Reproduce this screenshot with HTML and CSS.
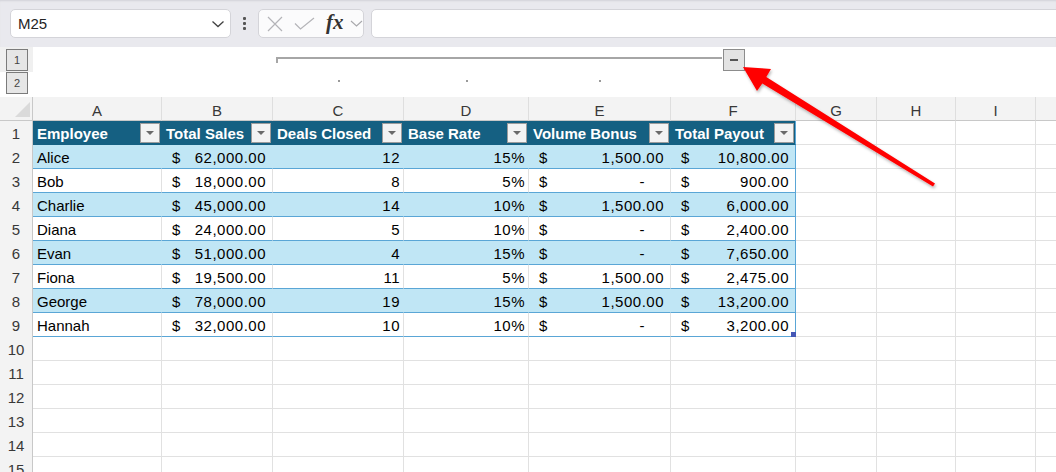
FILE: index.html
```html
<!DOCTYPE html>
<html lang="en">
<head>
  <meta charset="UTF-8" />
  <title>Sales Payout</title>
  <link rel="stylesheet" href="styles.css">
</head>
<body>

<div class="topbar">
  <div class="namebox">
    <span>M25</span>
    <svg width="14" height="8" viewBox="0 0 14 8"><path d="M1.5 1.5l5.5 5 5.5-5" fill="none" stroke="#424242" stroke-width="1.3"/></svg>
  </div>
  <div class="kebab"><i></i><i></i><i></i></div>
  <div class="fxbox">
    <svg class="ico" width="16" height="16" viewBox="0 0 16 16"><path d="M1 1l14 14M15 1L1 15" stroke="#b4b4b8" stroke-width="1.2" fill="none"/></svg>
    <svg class="ico" width="21" height="13" viewBox="0 0 21 13"><path d="M1 6.5l5.5 5.5L20 1" stroke="#b4b4b8" stroke-width="1.2" fill="none"/></svg>
    <span class="fx">fx</span>
    <svg width="13" height="7" viewBox="0 0 13 7"><path d="M1 1l5.5 5 5.5-5" fill="none" stroke="#a8a8ac" stroke-width="1.1"/></svg>
  </div>
  <div class="formula"></div>
</div>

<div class="outline">
  <div class="lvl lvl-1">1</div>
  <div class="lvl lvl-2">2</div>
  <div class="group-line"></div>
  <div class="collapse"><i></i></div>
  <span class="dot dot-c"></span>
  <span class="dot dot-d"></span>
  <span class="dot dot-e"></span>
</div>

<div class="sheet">
  <div class="corner"></div>
  <div class="ch">A</div><div class="ch">B</div><div class="ch">C</div><div class="ch">D</div><div class="ch">E</div>
  <div class="ch">F</div><div class="ch">G</div><div class="ch">H</div><div class="ch">I</div><div class="ch last-col"></div>

  <div class="rh">1</div>
  <div class="c th">Employee<span class="filter"></span></div>
  <div class="c th">Total Sales<span class="filter"></span></div>
  <div class="c th">Deals Closed<span class="filter"></span></div>
  <div class="c th">Base Rate<span class="filter"></span></div>
  <div class="c th">Volume Bonus<span class="filter"></span></div>
  <div class="c th edge">Total Payout<span class="filter"></span></div>
  <div class="c"></div><div class="c"></div><div class="c"></div><div class="c last-col"></div>

  <div class="rh">2</div>
  <div class="c t band">Alice</div>
  <div class="c t band acc"><span>$</span><span>62,000.00</span></div>
  <div class="c t band num">12</div>
  <div class="c t band num">15%</div>
  <div class="c t band acc"><span>$</span><span>1,500.00</span></div>
  <div class="c t band acc edge"><span>$</span><span>10,800.00</span></div>
  <div class="c"></div><div class="c"></div><div class="c"></div><div class="c last-col"></div>

  <div class="rh">3</div>
  <div class="c t">Bob</div>
  <div class="c t acc"><span>$</span><span>18,000.00</span></div>
  <div class="c t num">8</div>
  <div class="c t num">5%</div>
  <div class="c t acc"><span>$</span><span class="dash">-</span></div>
  <div class="c t acc edge"><span>$</span><span>900.00</span></div>
  <div class="c"></div><div class="c"></div><div class="c"></div><div class="c last-col"></div>

  <div class="rh">4</div>
  <div class="c t band">Charlie</div>
  <div class="c t band acc"><span>$</span><span>45,000.00</span></div>
  <div class="c t band num">14</div>
  <div class="c t band num">10%</div>
  <div class="c t band acc"><span>$</span><span>1,500.00</span></div>
  <div class="c t band acc edge"><span>$</span><span>6,000.00</span></div>
  <div class="c"></div><div class="c"></div><div class="c"></div><div class="c last-col"></div>

  <div class="rh">5</div>
  <div class="c t">Diana</div>
  <div class="c t acc"><span>$</span><span>24,000.00</span></div>
  <div class="c t num">5</div>
  <div class="c t num">10%</div>
  <div class="c t acc"><span>$</span><span class="dash">-</span></div>
  <div class="c t acc edge"><span>$</span><span>2,400.00</span></div>
  <div class="c"></div><div class="c"></div><div class="c"></div><div class="c last-col"></div>

  <div class="rh">6</div>
  <div class="c t band">Evan</div>
  <div class="c t band acc"><span>$</span><span>51,000.00</span></div>
  <div class="c t band num">4</div>
  <div class="c t band num">15%</div>
  <div class="c t band acc"><span>$</span><span class="dash">-</span></div>
  <div class="c t band acc edge"><span>$</span><span>7,650.00</span></div>
  <div class="c"></div><div class="c"></div><div class="c"></div><div class="c last-col"></div>

  <div class="rh">7</div>
  <div class="c t">Fiona</div>
  <div class="c t acc"><span>$</span><span>19,500.00</span></div>
  <div class="c t num">11</div>
  <div class="c t num">5%</div>
  <div class="c t acc"><span>$</span><span>1,500.00</span></div>
  <div class="c t acc edge"><span>$</span><span>2,475.00</span></div>
  <div class="c"></div><div class="c"></div><div class="c"></div><div class="c last-col"></div>

  <div class="rh">8</div>
  <div class="c t band">George</div>
  <div class="c t band acc"><span>$</span><span>78,000.00</span></div>
  <div class="c t band num">19</div>
  <div class="c t band num">15%</div>
  <div class="c t band acc"><span>$</span><span>1,500.00</span></div>
  <div class="c t band acc edge"><span>$</span><span>13,200.00</span></div>
  <div class="c"></div><div class="c"></div><div class="c"></div><div class="c last-col"></div>

  <div class="rh">9</div>
  <div class="c t">Hannah</div>
  <div class="c t acc"><span>$</span><span>32,000.00</span></div>
  <div class="c t num">10</div>
  <div class="c t num">10%</div>
  <div class="c t acc"><span>$</span><span class="dash">-</span></div>
  <div class="c t acc edge"><span>$</span><span>3,200.00</span><i class="handle"></i></div>
  <div class="c"></div><div class="c"></div><div class="c"></div><div class="c last-col"></div>

  <div class="rh">10</div>
  <div class="c"></div><div class="c"></div><div class="c"></div><div class="c"></div><div class="c"></div>
  <div class="c"></div><div class="c"></div><div class="c"></div><div class="c"></div><div class="c last-col"></div>
  <div class="rh">11</div>
  <div class="c"></div><div class="c"></div><div class="c"></div><div class="c"></div><div class="c"></div>
  <div class="c"></div><div class="c"></div><div class="c"></div><div class="c"></div><div class="c last-col"></div>
  <div class="rh">12</div>
  <div class="c"></div><div class="c"></div><div class="c"></div><div class="c"></div><div class="c"></div>
  <div class="c"></div><div class="c"></div><div class="c"></div><div class="c"></div><div class="c last-col"></div>
  <div class="rh">13</div>
  <div class="c"></div><div class="c"></div><div class="c"></div><div class="c"></div><div class="c"></div>
  <div class="c"></div><div class="c"></div><div class="c"></div><div class="c"></div><div class="c last-col"></div>
  <div class="rh">14</div>
  <div class="c"></div><div class="c"></div><div class="c"></div><div class="c"></div><div class="c"></div>
  <div class="c"></div><div class="c"></div><div class="c"></div><div class="c"></div><div class="c last-col"></div>
  <div class="rh">15</div>
  <div class="c"></div><div class="c"></div><div class="c"></div><div class="c"></div><div class="c"></div>
  <div class="c"></div><div class="c"></div><div class="c"></div><div class="c"></div><div class="c last-col"></div>
</div>

<!-- callout arrow pointing at the collapse button -->
<svg class="callout" width="1056" height="472" viewBox="0 0 1056 472">
  <defs>
    <filter id="shadow" x="-10%" y="-10%" width="130%" height="130%">
      <feDropShadow dx="1" dy="2" stdDeviation="1.5" flood-color="#000" flood-opacity="0.3"/>
    </filter>
  </defs>
  <polygon points="743,67 771,69 766.3,77 935,183.5 933,186.5 762.3,83.5 757,91" fill="#ff0000" filter="url(#shadow)"/>
</svg>

</body>
</html>
```

FILE: styles.css
```css
* {
  box-sizing: border-box;
}
body {
  margin: 0;
  width: 1056px;
  height: 472px;
  overflow: hidden;
  position: relative;
  font-family: "Liberation Sans", Arial, sans-serif;
  font-size: 15px;
  color: #000;
  background: #fff;
}

/* formula bar */
.topbar {
  height: 47px;
  display: flex;
  align-items: flex-start;
  padding: 9px 0 0 10px;
  background: #e9e9ee;
  box-shadow: inset 0 2px 2px -1px #d2d2d8;
}
.namebox {
  width: 221px;
  height: 29px;
  display: flex;
  align-items: center;
  justify-content: space-between;
  padding: 0 5px 0 7px;
  background: #fff;
  border: 1px solid #d4d4d9;
  border-radius: 5px;
  color: #242424;
}
.kebab {
  width: 27px;
  height: 29px;
  display: flex;
  flex-direction: column;
  align-items: center;
  justify-content: center;
  gap: 2px;
}
.kebab i {
  width: 3px;
  height: 3px;
  background: #555;
  border-radius: 1px;
}
.fxbox {
  width: 106px;
  height: 29px;
  display: flex;
  align-items: center;
  padding-left: 8px;
  background: #fbfbfc;
  border: 1px solid #d4d4d9;
  border-radius: 5px;
}
.fxbox .ico {
  margin-right: 11px;
}
.fx {
  font-family: "Liberation Serif", "Times New Roman", serif;
  font-style: italic;
  font-weight: bold;
  font-size: 21px;
  color: #333;
  margin: -3px 6px 0 0;
}
.formula {
  flex: 1;
  height: 29px;
  margin: 0 -10px 0 7px;
  background: #fff;
  border: 1px solid #d4d4d9;
  border-radius: 5px;
}

/* outline (grouping) strip */
.outline,
.sheet {
  display: grid;
  grid-template-columns: 33px 129px 111px 131px 125px 142px 125px 81px 79px 80px 1fr;
}
.outline {
  height: 50px;
  padding-top: 2px;
  grid-template-rows: 23px 23px;
  background: linear-gradient(#f0f0f0, #f0f0f0) no-repeat 0 0 / 33px 25px, #fff;
}
.lvl {
  grid-column: 1;
  width: 22px;
  height: 22px;
  margin-left: 6px;
  display: flex;
  align-items: center;
  justify-content: center;
  font-size: 11px;
  color: #444;
  background: #e6e6e6;
  border: 1px solid #7b7b7b;
}
.lvl-1 { grid-row: 1; }
.lvl-2 { grid-row: 2; }
.group-line {
  grid-column: 4 / 8;
  grid-row: 1;
  height: 6px;
  margin: 8px 74px 0 3px;
  border-top: 2px solid #a6a6a6;
  border-left: 2px solid #a6a6a6;
}
.collapse {
  grid-column: 7;
  grid-row: 1;
  justify-self: center;
  width: 22px;
  height: 22px;
  display: flex;
  align-items: center;
  justify-content: center;
  background: #e3e3e3;
  border: 1px solid #8c8c8c;
}
.collapse i {
  width: 8px;
  height: 2px;
  background: #555;
}
.dot {
  grid-row: 2;
  justify-self: center;
  width: 2px;
  height: 2px;
  margin-top: 8px;
  background: #9a9a9a;
}
.dot-c { grid-column: 4; }
.dot-d { grid-column: 5; }
.dot-e { grid-column: 6; }

/* grid */
.sheet {
  grid-auto-rows: 24px;
}
.corner {
  position: relative;
  background: #f3f3f3;
  border-right: 1px solid #c8c8c8;
  border-bottom: 1px solid #c8c8c8;
}
.corner::after {
  content: "";
  position: absolute;
  right: 2px;
  bottom: 3px;
  border-left: 15px solid transparent;
  border-bottom: 15px solid #dadada;
}
.ch {
  display: flex;
  align-items: center;
  justify-content: center;
  padding-top: 3px;
  background: #f3f3f3;
  color: #383838;
  border-right: 1px solid #dedede;
  border-bottom: 1px solid #c8c8c8;
}
.rh {
  display: flex;
  align-items: center;
  justify-content: center;
  padding-top: 1px;
  background: #f3f3f3;
  color: #383838;
  border-right: 1px solid #c8c8c8;
}
.c {
  position: relative;
  display: flex;
  align-items: center;
  padding: 1px 4px 0;
  white-space: nowrap;
  border-right: 1px solid #e1e1e1;
  border-bottom: 1px solid #e1e1e1;
}
.last-col {
  border-right: none;
}

/* table */
.th {
  justify-content: space-between;
  padding-right: 1px;
  font-weight: bold;
  color: #fff;
  background: #156082;
  border-right-color: #156082;
  border-bottom-color: #156082;
}
.filter {
  position: relative;
  flex: none;
  width: 20px;
  height: 20px;
  background: #f3f3f3;
  border: 1px solid #9c9c9c;
}
.filter::after {
  content: "";
  position: absolute;
  left: 5px;
  top: 7px;
  border-left: 4px solid transparent;
  border-right: 4px solid transparent;
  border-top: 4px solid #6a6a6a;
}
.t {
  border-bottom-color: #5aa6d6;
}
.band {
  background: #c0e6f5;
  border-right-color: #c0e6f5;
}
.edge {
  border-right-color: #5aa6d6;
}
.num {
  justify-content: flex-end;
  padding-right: 3px;
  letter-spacing: 0.5px;
}
.acc {
  justify-content: space-between;
  padding: 1px 6px 0 10px;
  letter-spacing: 0.5px;
}
.dash {
  margin-right: 19px;
}
.handle {
  position: absolute;
  right: -1px;
  bottom: -1px;
  width: 5px;
  height: 5px;
  background: #4457b5;
}

.callout {
  position: absolute;
  left: 0;
  top: 0;
  pointer-events: none;
}
```
